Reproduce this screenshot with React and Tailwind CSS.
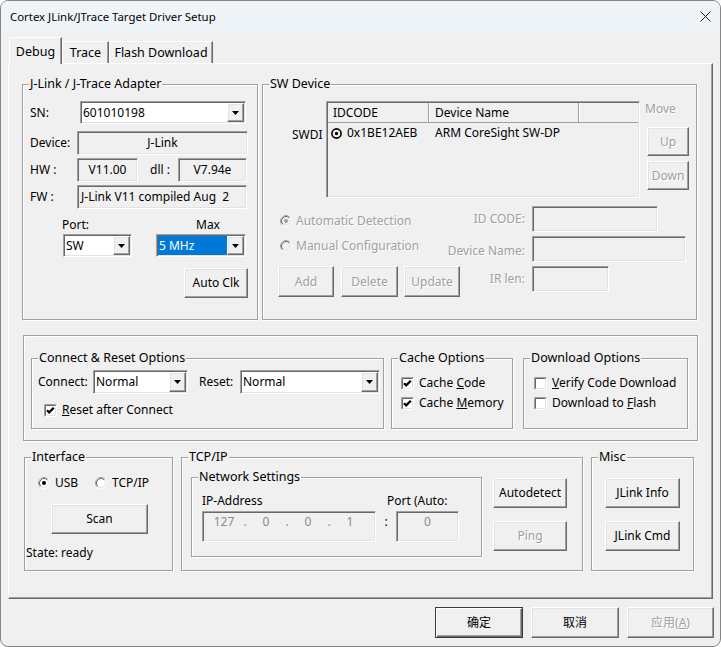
const sunken = "border border-t-[#a0a0a0] border-l-[#a0a0a0] border-r-white border-b-white shadow-[inset_1px_1px_0_#696969,inset_-1px_-1px_0_#e3e3e3]"
const raised = "border border-t-white border-l-white border-r-[#696969] border-b-[#696969] shadow-[inset_-1px_-1px_0_#a0a0a0,inset_1px_1px_0_#e3e3e3]"
const dis = "text-[#a0a0a0] [text-shadow:1px_1px_0_#fff]"

function Group({label, className = "", children}){
 return (
  <div className={`relative shrink-0 border border-[#a0a0a0] shadow-[1px_1px_0_#fff,inset_1px_1px_0_#fff] ${className}`}>
   {label && (
    <span className="absolute -top-[9px] left-[6px] bg-[#f0f0f0] px-[1px] text-[12.5px] leading-[16px] whitespace-nowrap">
     {label}
    </span>
   )}
   {children}
  </div>
 )
}

function Btn({children, className = "", disabled}){
 return (
  <button type="button" className={`shrink-0 flex items-center justify-center bg-[#f0f0f0] ${raised} ${disabled ? dis : "text-black"} ${className}`}>
   {children}
  </button>
 )
}

function Field({children, className = ""}){
 return (
  <div className={`shrink-0 flex items-center bg-[#f0f0f0] overflow-hidden whitespace-pre ${sunken} ${className}`}>
   {children}
  </div>
 )
}

function Tri(){
 return (
  <svg width="7" height="4" viewBox="0 0 7 4">
   <polygon points="0,0 7,0 3.5,4" fill="#000" />
  </svg>
 )
}

function Combo({value, className = "", selected}){
 return (
  <div className={`shrink-0 flex bg-white p-[1px] ${sunken} ${className}`}>
   <div className={`flex-1 flex items-center pl-[1px] whitespace-nowrap ${selected ? "bg-[#0078d7] text-white" : ""}`}>
    {value}
   </div>
   <div className={`w-[17px] flex items-center justify-center bg-[#f0f0f0] ${raised}`}>
    <Tri />
   </div>
  </div>
 )
}

function Check({checked}){
 return (
  <svg width="13" height="13" viewBox="0 0 13 13" className="shrink-0">
   <rect x="0" y="0" width="13" height="13" fill="#fff" />
   <path d="M0.5 12.5 H12.5 V0.5" stroke="#fff" fill="none" />
   <path d="M1.5 11.5 H11.5 V1.5" stroke="#e3e3e3" fill="none" />
   <path d="M0.5 12.5 V0.5 H12.5" stroke="#a0a0a0" fill="none" />
   <path d="M1.5 11.5 V1.5 H11.5" stroke="#696969" fill="none" />
   {checked && <path d="M3 6.2 L5.2 8.4 L9.8 3.8" stroke="#000" strokeWidth="2.2" fill="none" />}
  </svg>
 )
}

function Radio({checked, disabled}){
 return (
  <svg width="12" height="12" viewBox="0 0 12 12" className="shrink-0">
   <circle cx="6" cy="6" r="5.5" fill="none" stroke="#fff" />
   <path d="M2.11 9.89 A5.5 5.5 0 0 1 9.89 2.11" stroke="#a0a0a0" fill="none" />
   <circle cx="6" cy="6" r="4.5" fill={disabled ? "#f0f0f0" : "#fff"} stroke="#e3e3e3" />
   <path d="M2.82 9.18 A4.5 4.5 0 0 1 9.18 2.82" stroke="#696969" fill="none" />
   {checked && <circle cx="6" cy="6" r="2" fill={disabled ? "#a0a0a0" : "#000"} />}
  </svg>
 )
}

function ListRadio(){
 return (
  <svg width="11" height="11" viewBox="0 0 11 11" className="shrink-0">
   <circle cx="5.5" cy="5.5" r="4.6" fill="none" stroke="#000" strokeWidth="1.6" />
   <circle cx="5.5" cy="5.5" r="1.7" fill="#000" />
  </svg>
 )
}

function CheckRow({checked, children, className = ""}){
 return (
  <div className={`flex items-center gap-[5px] h-[16px] whitespace-nowrap ${className}`}>
   <Check checked={checked} />
   {children}
  </div>
 )
}

export default function App(){

 return(

  <div className="w-[721px] h-[647px] font-['Noto_Sans','Noto_Sans_CJK_SC',sans-serif] text-[12px] leading-[16px] text-black">

   <div className="w-[721px] h-[647px] flex flex-col bg-[#f0f0f0] border border-[#858585] rounded-[8px] overflow-hidden">

    {/* TITLE BAR */}

    <div className="h-[31px] shrink-0 flex items-center justify-between bg-[#eff4f9] pl-[9px] pr-[9px]">
     <span className="text-[11.4px]">Cortex JLink/JTrace Target Driver Setup</span>
     <svg width="11" height="11" viewBox="0 0 11 11">
      <path d="M0.5 0.5 L10.5 10.5 M10.5 0.5 L0.5 10.5" stroke="#1a1a1a" strokeWidth="1" />
     </svg>
    </div>

    {/* TABS */}

    <div className="h-[31px] shrink-0 flex items-end pl-[8px] text-[12.5px]">
     <div className="relative z-10 -mb-px w-[53px] h-[27px] flex justify-center pt-[6px] bg-[#f0f0f0] border-l border-t border-r border-l-white border-t-white border-r-[#696969] shadow-[inset_-1px_0_0_#a0a0a0]">
      Debug
     </div>
     <div className="w-[47px] h-[22px] flex justify-center pt-[3px] border-l border-t border-r border-l-white border-t-white border-r-[#696969] shadow-[inset_-1px_0_0_#a0a0a0]">
      Trace
     </div>
     <div className="w-[104px] h-[22px] flex justify-center pt-[3px] border-l border-t border-r border-l-white border-t-white border-r-[#696969] shadow-[inset_-1px_0_0_#a0a0a0]">
      Flash Download
     </div>
    </div>

    {/* TAB PANEL */}

    <div className="ml-[7px] w-[705px] h-[536px] shrink-0 pt-[20px] border border-t-white border-l-white border-r-[#696969] border-b-[#696969] shadow-[inset_-1px_-1px_0_#a0a0a0]">

     {/* ROW 1 */}

     <div className="flex gap-[4px] ml-[13px]">

      <Group label="J-Link / J-Trace Adapter" className="w-[236px] h-[236px]">

       <div className="flex items-center mt-[16px] ml-[7px]">
        <span className="w-[50px]">SN:</span>
        <Combo className="w-[166px] h-[23px]" value="601010198" />
       </div>

       <div className="flex items-center mt-[7px] ml-[7px]">
        <span className="w-[47px]">Device:</span>
        <Field className="w-[171px] h-[24px] justify-center">J-Link</Field>
       </div>

       <div className="flex items-center mt-[3px] ml-[7px]">
        <span className="w-[47px]">HW :</span>
        <Field className="w-[61px] h-[24px] justify-center">V11.00</Field>
        <span className="ml-[12px] w-[28px]">dll :</span>
        <Field className="w-[69px] h-[24px] justify-center">V7.94e</Field>
       </div>

       <div className="flex items-center mt-[3px] ml-[7px]">
        <span className="w-[47px]">FW :</span>
        <Field className="w-[170px] h-[24px] pl-[3px]">J-Link V11 compiled Aug  2</Field>
       </div>

       <div className="flex mt-[8px] ml-[39px]">
        <span className="w-[134px]">Port:</span>
        <span>Max</span>
       </div>

       <div className="flex mt-[1px] ml-[40px]">
        <Combo className="w-[69px] h-[23px]" value="SW" />
        <Combo className="ml-[24px] w-[90px] h-[23px]" value="5 MHz" selected />
       </div>

       <Btn className="mt-[11px] ml-[161px] w-[64px] h-[30px]">Auto Clk</Btn>

      </Group>

      <Group label="SW Device" className="w-[435px] h-[236px]">

       <div className="flex items-start mt-[16px]">

        <span className="ml-[29px] w-[34px] mt-[26px]">SWDI</span>

        <div className={`w-[314px] h-[97px] p-[1px] bg-[#f0f0f0] ${sunken}`}>
         <div className="flex h-[20px] border-b border-[#a0a0a0]">
          <div className="w-[101px] pl-[5px] flex items-center border-r border-[#a0a0a0] shadow-[1px_0_0_#fff]">IDCODE</div>
          <div className="w-[150px] pl-[6px] flex items-center border-r border-[#a0a0a0] shadow-[1px_0_0_#fff]">Device Name</div>
          <div className="flex-1" />
         </div>
         <div className="flex h-[20px] items-center">
          <div className="w-[101px] pl-[3px] flex items-center gap-[5px]">
           <ListRadio />
           <span>0x1BE12AEB</span>
          </div>
          <div className="pl-[6px] whitespace-nowrap">ARM CoreSight SW-DP</div>
         </div>
        </div>

        <div className="ml-[5px] flex flex-col">
         <span className={dis}>Move</span>
         <Btn disabled className="mt-[10px] ml-[2px] w-[42px] h-[29px]">Up</Btn>
         <Btn disabled className="mt-[5px] ml-[2px] w-[42px] h-[29px]">Down</Btn>
        </div>

       </div>

       <div className="flex mt-[8px]">

        <div className="ml-[15px] w-[182px] flex flex-col">
         <div className={`mt-[7px] ml-[2px] h-[16px] flex items-center gap-[4px] whitespace-nowrap ${dis}`}>
          <Radio checked disabled />
          <span>Automatic Detection</span>
         </div>
         <div className={`mt-[9px] ml-[2px] h-[16px] flex items-center gap-[4px] whitespace-nowrap ${dis}`}>
          <Radio disabled />
          <span>Manual Configuration</span>
         </div>
         <div className="mt-[12px] flex">
          <Btn disabled className="w-[56px] h-[31px]">Add</Btn>
          <Btn disabled className="ml-[7px] w-[57px] h-[31px]">Delete</Btn>
          <Btn disabled className="ml-[6px] w-[56px] h-[31px]">Update</Btn>
         </div>
        </div>

        <div className="flex flex-col gap-[4px]">
         <div className="flex items-center">
          <span className={`w-[65px] flex justify-end whitespace-nowrap ${dis}`}>ID CODE:</span>
          <Field className="ml-[7px] w-[126px] h-[26px]" />
         </div>
         <div className="flex items-center">
          <span className={`w-[65px] flex justify-end whitespace-nowrap pt-[4px] ${dis}`}>Device Name:</span>
          <Field className="ml-[7px] w-[154px] h-[26px]" />
         </div>
         <div className="flex items-center">
          <span className={`w-[65px] flex justify-end whitespace-nowrap ${dis}`}>IR len:</span>
          <Field className="ml-[7px] w-[77px] h-[26px]" />
         </div>
        </div>

       </div>

      </Group>

     </div>

     {/* ROW 2 */}

     <Group className="mt-[15px] ml-[14px] w-[675px] h-[106px]">

      <div className="flex items-start pt-[22px] pl-[7px]">

       <Group label="Connect & Reset Options" className="w-[353px] h-[71px]">
        <div className="flex items-center mt-[11px] ml-[6px]">
         <span className="w-[55px]">Connect:</span>
         <Combo className="w-[95px] h-[24px]" value="Normal" />
         <span className="ml-[11px] w-[41px]">Reset:</span>
         <Combo className="w-[140px] h-[24px]" value="Normal" />
        </div>
        <CheckRow checked className="mt-[8px] ml-[12px]">
         <span><span className="underline">R</span>eset after Connect</span>
        </CheckRow>
       </Group>

       <Group label="Cache Options" className="ml-[7px] w-[122px] h-[71px]">
        <CheckRow checked className="mt-[16px] ml-[9px]">
         <span>Cache <span className="underline">C</span>ode</span>
        </CheckRow>
        <CheckRow checked className="mt-[4px] ml-[9px]">
         <span>Cache <span className="underline">M</span>emory</span>
        </CheckRow>
       </Group>

       <Group label="Download Options" className="ml-[10px] w-[165px] h-[71px]">
        <CheckRow className="mt-[16px] ml-[10px]">
         <span><span className="underline">V</span>erify Code Download</span>
        </CheckRow>
        <CheckRow className="mt-[4px] ml-[10px]">
         <span>Download to <span className="underline">F</span>lash</span>
        </CheckRow>
       </Group>

      </div>

     </Group>

     {/* ROW 3 */}

     <div className="flex items-start mt-[16px] ml-[15px]">

      <Group label="Interface" className="w-[149px] h-[114px]">
       <div className="flex items-center mt-[17px] ml-[13px] h-[16px]">
        <div className="w-[57px] flex items-center gap-[5px]">
         <Radio checked />
         <span>USB</span>
        </div>
        <div className="flex items-center gap-[5px]">
         <Radio />
         <span>TCP/IP</span>
        </div>
       </div>
       <Btn className="mt-[13px] ml-[26px] w-[97px] h-[30px]">Scan</Btn>
       <div className="mt-[11px] ml-[1px]">State: ready</div>
      </Group>

      <Group label="TCP/IP" className="ml-[8px] w-[402px] h-[114px]">
       <div className="flex items-start">

        <Group label="Network Settings" className="ml-[9px] mt-[19px] w-[291px] h-[80px]">
         <div className="flex mt-[15px] ml-[10px]">
          <span className="w-[185px] whitespace-nowrap">IP-Address</span>
          <span className="whitespace-nowrap">Port (Auto:</span>
         </div>
         <div className="flex items-start mt-[2px] ml-[10px]">
          <Field className="w-[174px] h-[31px] items-start pt-[2px] pl-[2px] text-[#8a8a8a]">
           <span className="w-[38px] text-center">127</span>
           <span className="w-[4px] text-center">.</span>
           <span className="w-[38px] text-center">0</span>
           <span className="w-[4px] text-center">.</span>
           <span className="w-[38px] text-center">0</span>
           <span className="w-[4px] text-center">.</span>
           <span className="w-[38px] text-center">1</span>
          </Field>
          <span className="w-[20px] pt-[3px] text-center">:</span>
          <Field className="w-[63px] h-[31px] items-start justify-center pt-[2px] text-[#8a8a8a]">0</Field>
         </div>
        </Group>

        <div className="ml-[11px] mt-[20px] flex flex-col">
         <Btn className="w-[74px] h-[30px]">Autodetect</Btn>
         <Btn disabled className="mt-[13px] w-[74px] h-[30px]">Ping</Btn>
        </div>

       </div>
      </Group>

      <Group label="Misc" className="ml-[8px] w-[103px] h-[114px]">
       <Btn className="mt-[20px] ml-[13px] w-[75px] h-[30px]">JLink Info</Btn>
       <Btn className="mt-[13px] ml-[13px] w-[75px] h-[30px]">JLink Cmd</Btn>
      </Group>

     </div>

    </div>

    {/* DIALOG BUTTONS */}

    <div className="flex justify-end gap-[8px] mt-[8px] pr-[6px]">
     <button type="button" className="w-[88px] h-[31px] flex items-center justify-center bg-[#f0f0f0] border border-[#3b3b3b] shadow-[inset_1px_1px_0_#fff,inset_-1px_-1px_0_#696969,inset_-2px_-2px_0_#a0a0a0]">
      确定
     </button>
     <Btn className="w-[88px] h-[31px]">取消</Btn>
     <Btn disabled className="w-[87px] h-[31px]">应用(<span className="underline">A</span>)</Btn>
    </div>

   </div>

  </div>

 )

}
